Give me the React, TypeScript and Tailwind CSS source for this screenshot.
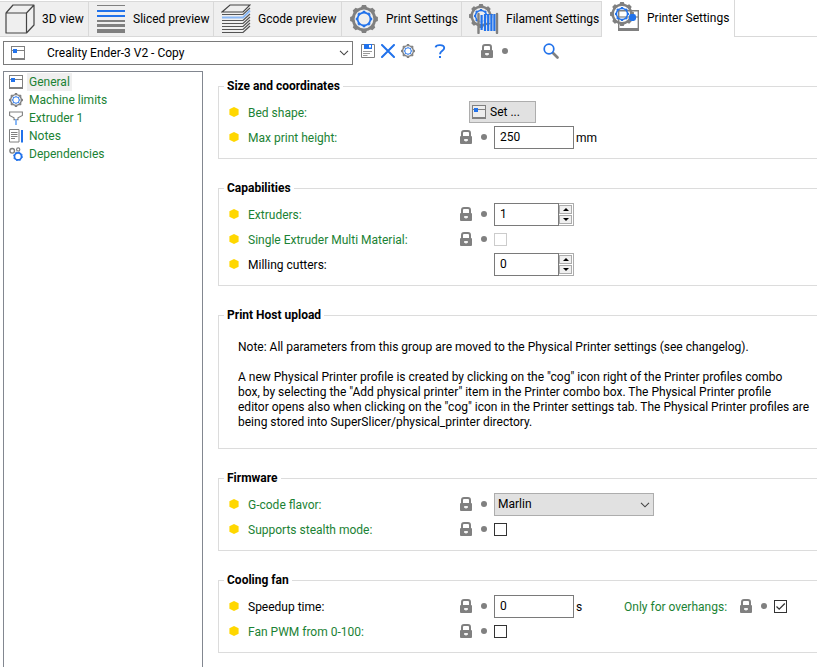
import { useState, type ReactNode } from "react";

const GREY = "#808080";
const BLUE = "#2172eb";
const TURNS = [0, 45, 90, 135, 180, 225, 270, 315];

/* ---------- icons ---------- */

function GearShape({ cx, cy, scale = 1 }: { cx: number; cy: number; scale?: number }) {
  return (
    <g transform={`translate(${cx} ${cy}) scale(${scale})`} fill="none">
      <circle r="10.8" stroke={GREY} strokeWidth="2.8" />
      {TURNS.map((a) => (
        <path key={a} d="M-3.2 -11 L-2 -13.9 H2 L3.2 -11 Z" fill={GREY} transform={`rotate(${a})`} />
      ))}
      <circle r="6.4" stroke={BLUE} strokeWidth="1.7" />
      {TURNS.map((a) => (
        <path key={a} d="M-1.8 -6.8 L-1 -8.2 H1 L1.8 -6.8 Z" fill={BLUE} transform={`rotate(${a})`} />
      ))}
    </g>
  );
}

function CubeIcon() {
  return (
    <svg width="30" height="30" viewBox="0 0 30 30" fill="none" stroke="#444" strokeWidth="1.2" strokeLinejoin="round" className="shrink-0">
      <path d="M1 9 H21.5 V29 H1 Z M1 9 L8 1 H29 L21.5 9 M29 1 V21 L21.5 29" />
    </svg>
  );
}

function SlicedIcon() {
  return (
    <svg width="28" height="28" viewBox="0 0 28 28" className="shrink-0" shapeRendering="crispEdges">
      <path fill={GREY} d="M0 0h28v1H0z M0 15h28v2H0z M0 19h28v3H0z M0 24h28v4H0z" />
      <path fill={BLUE} d="M0 5h28v2H0z M0 10h28v2H0z" />
    </svg>
  );
}

function GcodeIcon() {
  return (
    <svg width="30" height="30" viewBox="0 0 30 30" fill="none" className="shrink-0">
      <path d="M1 8 L9 1 H29 L22 8 Z" stroke="#444" strokeWidth="1.2" />
      {[11, 17, 20, 23, 26, 29].map((y) => (
        <path key={y} d={`M1 ${y - 0.5} H22 L29 ${y - 7}`} stroke="#555" strokeWidth="1.2" />
      ))}
      <path d="M1 13.5 H22 L29 6.5" stroke="#8ab8f5" strokeWidth="2" />
    </svg>
  );
}

function CogIcon({ size }: { size: number }) {
  return (
    <svg width={size} height={size} viewBox="0 0 28 28" className="shrink-0">
      <GearShape cx={14} cy={14} />
    </svg>
  );
}

function FilamentIcon() {
  return (
    <svg width="30" height="30" viewBox="0 0 30 30" className="shrink-0">
      <GearShape cx={12} cy={12} scale={0.86} />
      <path d="M10.5 11h17v8h-17z" fill="#efefef" fillOpacity=".75" />
      <path d="M12.6 11v15 M16 10v17 M19.2 10v17 M22.4 10v17 M25.4 10v17" stroke={BLUE} strokeWidth="2.2" />
      <path d="M9.5 10v19 M28 10v19" stroke={GREY} strokeWidth="2.4" strokeLinecap="round" />
    </svg>
  );
}

function PrinterTabIcon() {
  return (
    <svg width="30" height="30" viewBox="0 0 30 30" className="shrink-0">
      <path d="M8.7 8.7h19.6v19H8.7z" fill="none" stroke={GREY} strokeWidth="1.4" />
      <path d="M8 26h21v3H8z" fill={GREY} />
      <path d="M8 15h20" stroke={GREY} strokeWidth="1.2" />
      <GearShape cx={12} cy={12} scale={0.86} />
      <rect x="19" y="12" width="7" height="7" rx="2.4" fill={BLUE} />
    </svg>
  );
}

function BedIcon() {
  return (
    <svg width="14" height="14" viewBox="0 0 14 14" className="shrink-0" shapeRendering="crispEdges">
      <path d="M.5 .5h13v12H.5z" fill="#fff" fillOpacity=".4" stroke={GREY} />
      <path d="M0 12h14v2H0z M1 4h12v1H1z" fill={GREY} />
      <path d="M2 3h4v4H2z" fill={BLUE} />
    </svg>
  );
}

function ExtruderIcon() {
  return (
    <svg width="14" height="14" viewBox="0 0 14 14" fill="none" className="shrink-0">
      <path d="M.6 1 H13.4 V4.5 L9 6.8 V8.6 H5 V6.8 L.6 4.5 Z" stroke={GREY} strokeWidth="1.1" />
      <path d="M7 8v6" stroke="#7cb0f5" strokeWidth="1.8" />
    </svg>
  );
}

function NotesIcon() {
  return (
    <svg width="14" height="14" viewBox="0 0 14 14" fill="none" className="shrink-0">
      <path d="M.5 .5h9.5v12.5H.5z" stroke={GREY} />
      <path d="M2 3.5h6.5 M2 5.5h6.5 M2 7.5h6.5 M2 9.5h4" stroke={GREY} />
      <path d="M13 1v12.5" stroke={BLUE} strokeWidth="2" />
    </svg>
  );
}

function DependenciesIcon() {
  return (
    <svg width="14" height="14" viewBox="0 0 14 14" fill="none" className="shrink-0">
      <circle cx="3.2" cy="3.8" r="2.3" stroke={GREY} strokeWidth="1.4" />
      <circle cx="9.2" cy="2.4" r="1.6" stroke={GREY} strokeWidth="1.2" />
      <circle cx="9" cy="9.4" r="3.5" stroke={BLUE} strokeWidth="1.7" />
      <circle cx="9" cy="9.4" r="4.4" stroke={BLUE} strokeWidth="1" strokeDasharray="1.7 1.75" />
    </svg>
  );
}

function SaveIcon() {
  return (
    <svg width="14" height="14" viewBox="0 0 14 14" className="shrink-0">
      <path d="M.5 .5h13v13H.5z" fill="#fff" stroke={GREY} />
      <path d="M3 0h8v5H3z" fill={BLUE} />
      <path d="M8 1h2v2.5H8z" fill="#fff" />
      <path d="M2 7.5h9 M2 9.5h7 M2 11.5h4.5" stroke="#9a9a9a" />
    </svg>
  );
}

function DeleteIcon() {
  return (
    <svg width="14" height="14" viewBox="0 0 14 14" className="shrink-0">
      <path d="M1 1 L13 13 M13 1 L1 13" stroke={BLUE} strokeWidth="2" strokeLinecap="round" />
    </svg>
  );
}

function HelpIcon() {
  return (
    <svg width="12" height="14" viewBox="0 0 12 14" fill="none" className="shrink-0">
      <path d="M1.6 3.4 C2 .4 10.2 .2 10.2 4 C10.2 6.8 6 6.6 6 10.2" stroke={BLUE} strokeWidth="1.9" />
      <path d="M5 12h2v2H5z" fill={BLUE} />
    </svg>
  );
}

function SearchIcon() {
  return (
    <svg width="16" height="16" viewBox="0 0 16 16" fill="none" className="shrink-0">
      <path d="M10 10 L14.5 14.5" stroke={GREY} strokeWidth="2.6" strokeLinecap="round" />
      <circle cx="6" cy="6" r="4.8" stroke={BLUE} strokeWidth="1.7" />
    </svg>
  );
}

function LockIcon() {
  return (
    <svg width="12" height="14" viewBox="0 0 12 14" fill="none" className="shrink-0">
      <path d="M2 7 V3 Q2 1 4 1 H8 Q10 1 10 3 V7" stroke={GREY} strokeWidth="2" />
      <rect y="6" width="12" height="8" rx="1" fill={GREY} />
      <path d="M4 10h4 M6 9v2.4" stroke="#fff" strokeWidth="1.3" />
    </svg>
  );
}

function DotIcon() {
  return (
    <svg width="6" height="6" viewBox="0 0 6 6" className="shrink-0">
      <circle cx="3" cy="3" r="3" fill={GREY} />
    </svg>
  );
}

function HexBullet() {
  return (
    <svg width="10" height="10" viewBox="0 0 10 10" className="shrink-0">
      <path d="M5 0 L9.6 2.3 V7.7 L5 10 L.4 7.7 V2.3 Z" fill="#ffd700" />
    </svg>
  );
}

function Chevron() {
  return (
    <svg width="10" height="6" viewBox="0 0 10 6" fill="none" className="pointer-events-none col-start-1 row-start-1 mr-1 self-center justify-self-end">
      <path d="M1 .8 L5 4.8 L9 .8" stroke="#444" strokeWidth="1.1" />
    </svg>
  );
}

/* ---------- controls ---------- */

function LockAndDot() {
  return (
    <span className="flex h-6 w-[34px] shrink-0 items-center gap-[9px] self-start">
      <button type="button" aria-label="Lock value"><LockIcon /></button>
      <button type="button" aria-label="Revert value"><DotIcon /></button>
    </span>
  );
}

function Row({ label, id, plain, children }: { label: string; id: string; plain?: boolean; children: ReactNode }) {
  return (
    <div className="flex h-[25px] items-center">
      <span className="flex h-6 items-center self-start"><HexBullet /></span>
      <label htmlFor={id} className={`ml-[9px] w-[212px] shrink-0 pt-[2px] ${plain ? "text-black" : "text-[#1b8234]"}`}>
        {label}
      </label>
      {children}
    </div>
  );
}

function Check({ id, disabled, checked = false }: { id: string; disabled?: boolean; checked?: boolean }) {
  return (
    <span className="grid size-[13px] shrink-0">
      <input
        id={id}
        type="checkbox"
        disabled={disabled}
        defaultChecked={checked}
        className="peer col-start-1 row-start-1 size-[13px] appearance-none border border-[#333] bg-white disabled:border-[#ccc]"
      />
      <svg viewBox="0 0 13 13" fill="none" className="pointer-events-none invisible col-start-1 row-start-1 size-[13px] peer-checked:visible">
        <path d="M2.5 6.5 L5.2 9.2 L10.8 3.5" stroke="#333" strokeWidth="1.3" />
      </svg>
    </span>
  );
}

function TextBox({ id, value, unit }: { id: string; value: string; unit: string }) {
  return (
    <span className="flex items-center gap-[2px]">
      <input id={id} defaultValue={value} className="h-[23px] w-20 border border-[#7a7a7a] bg-white px-[5px] pb-px" />
      <span className="pt-[2px]">{unit}</span>
    </span>
  );
}

function Spin({ id, start }: { id: string; start: number }) {
  const [n, setN] = useState(start);
  const half = "flex h-[9px] w-[13px] items-center justify-center border border-[#acacac] bg-[#f0f0f0]";
  return (
    <span className="flex h-[23px] w-20">
      <input
        id={id}
        value={n}
        onChange={(e) => setN(Number(e.target.value) || 0)}
        className="w-[65px] border border-[#7a7a7a] bg-white px-[5px] pb-px"
      />
      <span className="flex flex-col justify-between border border-l-0 border-[#acacac] py-px pr-px">
        <button type="button" aria-label="Increase" className={half} onClick={() => setN(n + 1)}>
          <svg width="6" height="3" viewBox="0 0 6 3"><path d="M0 3 L3 0 L6 3Z" /></svg>
        </button>
        <button type="button" aria-label="Decrease" className={half} onClick={() => setN(Math.max(0, n - 1))}>
          <svg width="6" height="3" viewBox="0 0 6 3"><path d="M0 0 L3 3 L6 0Z" /></svg>
        </button>
      </span>
    </span>
  );
}

function Group({ title, children }: { title: string; children: ReactNode }) {
  return (
    <fieldset className="min-w-0 border border-r-0 border-[#dcdcdc] pt-[5px] pb-2 pl-[10px]">
      <legend className="-ml-[5px] px-[3px] leading-[18px] font-bold">{title}</legend>
      {children}
    </fieldset>
  );
}

/* ---------- page ---------- */

function Tab({ icon, label, width, gap }: { icon: ReactNode; label: string; width: string; gap: string }) {
  return (
    <button
      type="button"
      role="tab"
      aria-selected="false"
      className={`mt-px flex shrink-0 items-center border border-l-0 border-[#d9d9d9] bg-[#efefef] whitespace-nowrap ${width} ${gap}`}
    >
      {icon}
      <span className="pt-px">{label}</span>
    </button>
  );
}

const PAGES = [
  { label: "General", icon: <BedIcon /> },
  { label: "Machine limits", icon: <CogIcon size={14} /> },
  { label: "Extruder 1", icon: <ExtruderIcon /> },
  { label: "Notes", icon: <NotesIcon /> },
  { label: "Dependencies", icon: <DependenciesIcon /> },
];

export default function App() {
  return (
    <div className="flex h-screen flex-col overflow-hidden bg-white font-[Roboto,'Open_Sans',sans-serif] text-[12px] leading-[15px] text-black">
      <div role="tablist" className="flex h-[37px] shrink-0">
        <Tab icon={<CubeIcon />} label="3D view" width="w-[89px] pl-[5px]" gap="gap-[7px]" />
        <Tab icon={<SlicedIcon />} label="Sliced preview" width="w-[125px] pl-2" gap="gap-2" />
        <Tab icon={<GcodeIcon />} label="Gcode preview" width="w-[128px] pl-[7px]" gap="gap-[7px]" />
        <Tab icon={<CogIcon size={28} />} label="Print Settings" width="w-[120px] pl-2" gap="gap-2" />
        <Tab icon={<FilamentIcon />} label="Filament Settings" width="w-[140px] pl-[7px]" gap="gap-[7px]" />
        <button
          type="button"
          role="tab"
          aria-selected="true"
          className="flex w-[133px] shrink-0 items-center gap-[7px] border-r border-[#d9d9d9] bg-white pb-1 pl-2 whitespace-nowrap"
        >
          <PrinterTabIcon />
          <span className="pt-[3px]">Printer Settings</span>
        </button>
        <div className="flex-1 border-b border-[#d9d9d9]" />
      </div>

      <div className="flex h-[34px] shrink-0 items-center pb-[6px] pl-[3px] pt-1">
        <div className="grid h-6 w-[350px] shrink-0">
          <select
            aria-label="Printer profile"
            className="col-start-1 row-start-1 appearance-none border border-[#7a7a7a] bg-white pl-[43px]"
          >
            <option>Creality Ender-3 V2 - Copy</option>
          </select>
          <span className="pointer-events-none col-start-1 row-start-1 ml-2 self-center justify-self-start"><BedIcon /></span>
          <Chevron />
        </div>
        <div className="ml-2 flex items-center gap-[6px] pb-1">
          <button type="button" aria-label="Save profile"><SaveIcon /></button>
          <button type="button" aria-label="Delete profile"><DeleteIcon /></button>
          <button type="button" aria-label="Edit physical printer"><CogIcon size={14} /></button>
        </div>
        <button type="button" aria-label="Help" className="ml-[19px] pb-1"><HelpIcon /></button>
        <div className="ml-[35px] flex pb-1"><LockAndDot /></div>
        <button type="button" aria-label="Search" className="ml-[28px] pb-1"><SearchIcon /></button>
      </div>

      <div className="flex min-h-0 flex-1 pl-[3px]">
        <nav className="w-[200px] shrink-0 border border-b-0 border-[#828790] pt-px">
          {PAGES.map((p, i) => (
            <a key={p.label} href="#" className="flex h-[18px] items-center gap-1 pl-[5px] text-[#1b8234]">
              {p.icon}
              <span className={`px-[2px] leading-[18px] ${i === 0 ? "bg-[#efefef]" : ""}`}>{p.label}</span>
            </a>
          ))}
        </nav>

        <main className="ml-[15px] flex min-w-0 flex-1 flex-col gap-5 pt-[6px]">
          <Group title="Size and coordinates">
            <Row label="Bed shape:" id="bed">
              <button id="bed" type="button" className="mt-px ml-[9px] flex h-[22px] w-[67px] items-center gap-1 self-start border border-[#adadad] bg-[#e1e1e1] pl-[2px]">
                <BedIcon />
                Set ...
              </button>
            </Row>
            <Row label="Max print height:" id="height">
              <LockAndDot />
              <TextBox id="height" value="250" unit="mm" />
            </Row>
          </Group>

          <Group title="Capabilities">
            <Row label="Extruders:" id="extruders">
              <LockAndDot />
              <Spin id="extruders" start={1} />
            </Row>
            <Row label="Single Extruder Multi Material:" id="multi">
              <LockAndDot />
              <Check id="multi" disabled />
            </Row>
            <Row label="Milling cutters:" id="milling" plain>
              <span className="w-[34px]" />
              <Spin id="milling" start={0} />
            </Row>
          </Group>

          <Group title="Print Host upload">
            <div className="max-w-[600px] pt-[11px] pb-[10px] pl-[9px]">
              <p>Note: All parameters from this group are moved to the Physical Printer settings (see changelog).</p>
              <p className="mt-[15px]">
                A new Physical Printer profile is created by clicking on the "cog" icon right of the Printer profiles combo
                <br />
                box, by selecting the "Add physical printer" item in the Printer combo box. The Physical Printer profile
                <br />
                editor opens also when clicking on the "cog" icon in the Printer settings tab. The Physical Printer profiles are
                <br />
                being stored into SuperSlicer/physical_printer directory.
              </p>
            </div>
          </Group>

          <Group title="Firmware">
            <Row label="G-code flavor:" id="flavor">
              <LockAndDot />
              <span className="grid h-[23px] w-40">
                <select id="flavor" className="col-start-1 row-start-1 appearance-none border border-[#adadad] bg-[#e1e1e1] pl-[3px]">
                  <option>Marlin</option>
                </select>
                <Chevron />
              </span>
            </Row>
            <Row label="Supports stealth mode:" id="stealth">
              <LockAndDot />
              <Check id="stealth" />
            </Row>
          </Group>

          <Group title="Cooling fan">
            <Row label="Speedup time:" id="speedup" plain>
              <LockAndDot />
              <span className="w-[130px] shrink-0"><TextBox id="speedup" value="0" unit="s" /></span>
              <label htmlFor="overhangs" className="w-[116px] shrink-0 pt-[2px] text-[#1b8234]">Only for overhangs:</label>
              <LockAndDot />
              <Check id="overhangs" checked />
            </Row>
            <Row label="Fan PWM from 0-100:" id="pwm">
              <LockAndDot />
              <Check id="pwm" />
            </Row>
          </Group>
        </main>
      </div>
    </div>
  );
}
